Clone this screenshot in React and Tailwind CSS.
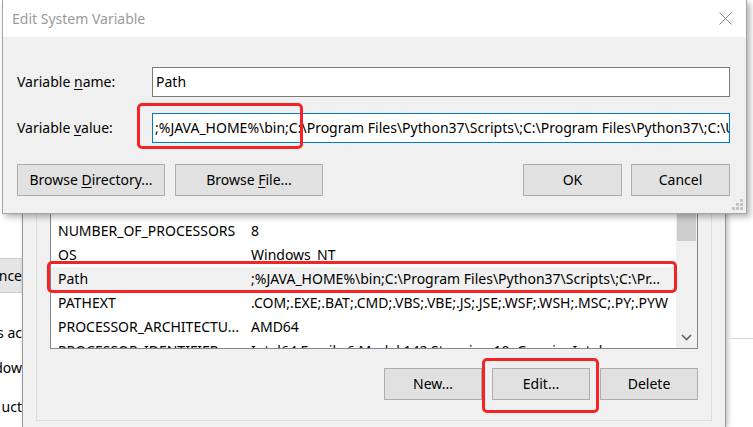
const rows = [
  ["NUMBER_OF_PROCESSORS", "8"],
  ["OS", "Windows_NT"],
  ["Path", ";%JAVA_HOME%\\bin;C:\\Program Files\\Python37\\Scripts\\;C:\\Pr..."],
  ["PATHEXT", ".COM;.EXE;.BAT;.CMD;.VBS;.VBE;.JS;.JSE;.WSF;.WSH;.MSC;.PY;.PYW"],
  ["PROCESSOR_ARCHITECTU...", "AMD64"],
  ["PROCESSOR_IDENTIFIER", "Intel64 Family 6 Model 142 Stepping 10, GenuineIntel"],
];

function WinButton({ children, className = "" }) {
  return (
    <div
      className={
        "h-[32px] flex items-center justify-center bg-[#e1e1e1] border border-[#adadad] text-black whitespace-pre " +
        className
      }
    >
      <span>{children}</span>
    </div>
  );
}

export default function App() {
  return (
    <div className="relative w-[753px] h-[427px] overflow-hidden bg-white flex font-['Noto_Sans',sans-serif] text-[14px] text-black leading-none">

      {/* window far behind, left edge */}
      <div className="w-[22px] h-full flex flex-col bg-white">
        <div className="h-[258px]" />
        <div className="h-[35px] flex items-center justify-end bg-[#e5e5e5] border-y border-[#cccccc] overflow-hidden whitespace-nowrap">
          ance
        </div>
        <div className="mt-[30px] h-[20px] flex items-center justify-end overflow-hidden whitespace-nowrap">s ac</div>
        <div className="mt-[15px] h-[20px] flex items-center justify-end overflow-hidden whitespace-nowrap">dow</div>
        <div className="mt-[19px] h-[20px] flex items-center justify-end overflow-hidden whitespace-nowrap">uct</div>
      </div>

      {/* Environment Variables window */}
      <div className="w-[704px] h-full bg-[#f0f0f0] border-x border-[#9a9a9a] shadow-[2px_0_5px_rgba(0,0,0,0.25)] pl-[13px] pr-[13px] pt-[100px]">
        <div className="h-[321px] border border-[#dcdcdc] px-[13px] pt-[22px] flex flex-col">

          {/* list */}
          <div className="h-[226px] bg-white border border-[#828790] flex overflow-hidden">
            <div className="flex-1 flex flex-col pt-[95px]">
              {rows.map(([name, value]) => (
                <div
                  key={name}
                  className={
                    "h-[24px] shrink-0 flex items-center pl-[7px] whitespace-nowrap " +
                    (name === "Path" ? "bg-[#f0f0f0]" : "")
                  }
                >
                  <span className="w-[193px] shrink-0">{name}</span>
                  <span>{value}</span>
                </div>
              ))}
            </div>
            <div className="w-[21px] bg-[#f0f0f0] flex flex-col justify-between items-center">
              <div className="mt-[60px] w-[19px] h-[57px] bg-[#cdcdcd]" />
              <svg width="11" height="7" viewBox="0 0 11 7" className="mb-[7px]">
                <path d="M1 1 L5.5 5.5 L10 1" fill="none" stroke="#606060" strokeWidth="1.6" />
              </svg>
            </div>
          </div>

          {/* buttons */}
          <div className="mt-[19px] flex justify-end gap-[10px]">
            <WinButton className="w-[98px]">New...</WinButton>
            <WinButton className="w-[98px]">Edit...</WinButton>
            <WinButton className="w-[98px]">Delete</WinButton>
          </div>
        </div>
      </div>

      {/* desktop right of window */}
      <div className="flex-1 flex flex-col">
        <div className="h-[338px]" />
        <div className="h-px bg-[#d4d4d4]" />
      </div>

      {/* Edit System Variable dialog */}
      <div className="absolute left-[2px] top-0 w-[745px] h-[214px] border border-t-0 border-[#a5a5a5] bg-[#f0f0f0] shadow-[3px_3px_6px_rgba(0,0,0,0.3)] flex flex-col">

        {/* title bar */}
        <div className="h-[37px] bg-white flex items-center justify-between pl-[9px] pr-[14px]">
          <span className="text-[#9a9a9a]">Edit System Variable</span>
          <svg width="13" height="13" viewBox="0 0 13 13">
            <path d="M0.5 0.5 L12.5 12.5 M12.5 0.5 L0.5 12.5" stroke="#8a8a8a" strokeWidth="1" />
          </svg>
        </div>

        {/* body */}
        <div className="relative flex-1 pl-[14px] pr-[16px] pt-[30px]">
          <div className="grid grid-cols-[135px_1fr] gap-y-[16px] items-center">
            <span>Variable <span className="underline underline-offset-2">n</span>ame:</span>
            <div className="h-[30px] bg-white border border-[#7a7a7a] flex items-center px-[3px] whitespace-nowrap overflow-hidden">
              Path
            </div>
            <span>Variable <span className="underline underline-offset-2">v</span>alue:</span>
            <div className="h-[30px] bg-white border border-[#0078d7] flex items-center px-[2px] whitespace-nowrap overflow-hidden">
              ;%JAVA_HOME%\bin;C:\Program Files\Python37\Scripts\;C:\Program Files\Python37\;C:\Users\Admin\AppData
            </div>
          </div>

          <div className="mt-[21px] flex">
            <WinButton className="w-[148px]">Browse <span className="underline underline-offset-2">D</span>irectory...</WinButton>
            <WinButton className="w-[148px] ml-[10px]">Browse <span className="underline underline-offset-2">F</span>ile...</WinButton>
            <div className="flex-1" />
            <WinButton className="w-[99px]">OK</WinButton>
            <WinButton className="w-[99px] ml-[9px]">Cancel</WinButton>
          </div>

          {/* resize grip */}
          <svg width="12" height="12" viewBox="0 0 12 12" className="absolute right-[2px] bottom-[2px]">
            <rect x="8" y="0" width="3" height="3" fill="#c4c4c4" />
            <rect x="4" y="4" width="3" height="3" fill="#c4c4c4" />
            <rect x="8" y="4" width="3" height="3" fill="#c4c4c4" />
            <rect x="0" y="8" width="3" height="3" fill="#c4c4c4" />
            <rect x="4" y="8" width="3" height="3" fill="#c4c4c4" />
            <rect x="8" y="8" width="3" height="3" fill="#c4c4c4" />
          </svg>
        </div>

        {/* annotation on value */}
        <div className="absolute left-[134px] top-[103px] w-[166px] h-[46px] border-[3px] border-[#f52424] rounded-[5px]" />
      </div>

      {/* annotations on background window */}
      <div className="absolute left-[47px] top-[261px] w-[630px] h-[32px] border-[3px] border-[#f52424] rounded-[5px]" />
      <div className="absolute left-[482px] top-[358px] w-[117px] h-[55px] border-[3px] border-[#f52424] rounded-[5px]" />
    </div>
  );
}
